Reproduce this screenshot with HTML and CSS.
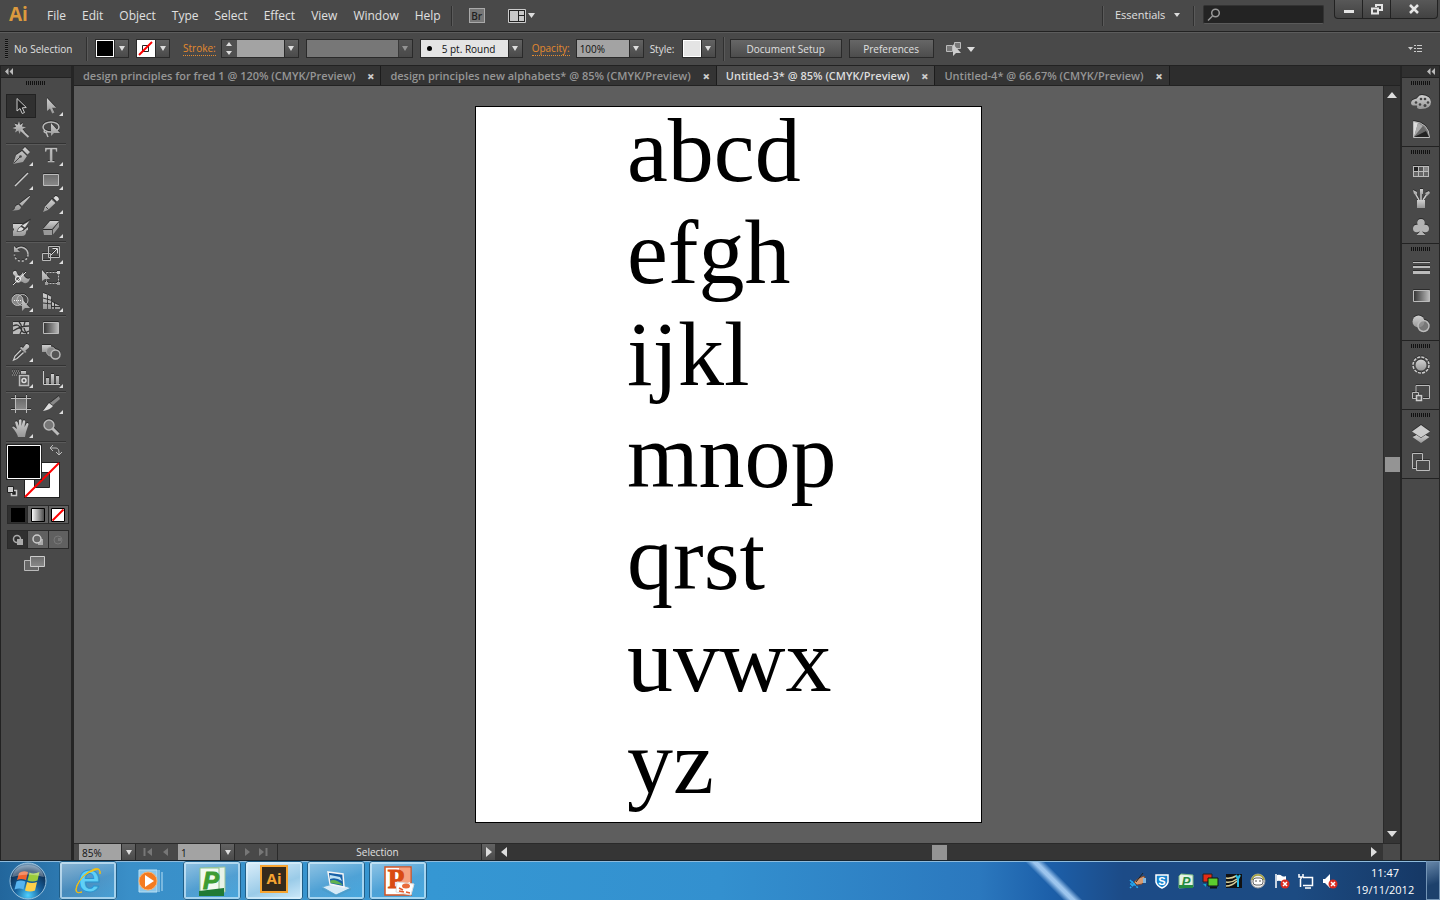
FILE: index.html
```html
<!DOCTYPE html>
<html lang="en">
<head>
  <meta charset="UTF-8" />
  <meta name="viewport" content="width=device-width, initial-scale=1.0">
  <title>Untitled-3* @ 85% (CMYK/Preview)</title>
  <link rel="stylesheet" href="styles.css">
</head>
<body>
  <svg class="defs" width="0" height="0">
    <defs>
      <linearGradient id="metal" x1="0" y1="0" x2="0" y2="1"><stop offset="0" stop-color="#d0d0d0"/><stop offset="1" stop-color="#979797"/></linearGradient>
      <linearGradient id="dim" x1="0" y1="0" x2="0" y2="1"><stop offset="0" stop-color="#6c6c6c"/><stop offset="1" stop-color="#898989"/></linearGradient>
      <linearGradient id="fade"><stop offset="0" stop-color="#333"/><stop offset="1" stop-color="#bbb"/></linearGradient>
      <linearGradient id="fadeWhite"><stop offset="0" stop-color="#fff"/><stop offset="1" stop-color="#444"/></linearGradient>
      <radialGradient id="orb" cx=".5" cy=".9" r=".9"><stop offset="0" stop-color="#4fd0ff"/><stop offset=".4" stop-color="#16609c"/><stop offset=".75" stop-color="#0d3157"/><stop offset="1" stop-color="#7fa6c6"/></radialGradient>
      <linearGradient id="ie" x1="0" y1="0" x2="0" y2="1"><stop offset="0" stop-color="#a5efff"/><stop offset="1" stop-color="#26a9e6"/></linearGradient>
    </defs>
  </svg>

  <!-- Menu bar -->
  <header class="menubar">
    <div class="logo">Ai</div>
    <nav class="menus">
      <button>File</button><button>Edit</button><button>Object</button><button>Type</button><button>Select</button><button>Effect</button><button>View</button><button>Window</button><button>Help</button>
    </nav>
    <span class="sep"></span>
    <button class="bridge" aria-label="Bridge">Br</button>
    <button class="arrange" aria-label="Arrange documents">
      <svg width="28" height="16" viewBox="0 0 28 16"><path d="M.5 1.500h17v13H.5z" fill="#222" stroke="#ccc"/><path d="M2 3h8v10H2zM11 3h5v4h-5zM11 8h5v5h-5z" fill="#c8c8c8"/><path d="M20 5h7l-3.500 5z" fill="#ddd"/></svg>
    </button>
    <div class="menubar-right">
      <span class="sep"></span>
      <button class="workspace">Essentials <i class="tri small"></i></button>
      <span class="sep"></span>
      <label class="search">
        <svg width="14" height="14" viewBox="0 0 14 14" fill="none" stroke="#999" stroke-width="1.500"><circle cx="8.500" cy="5" r="3.800"/><path d="M5.500 8L1 12.500"/></svg>
        <input type="text" aria-label="Search">
      </label>
      <div class="window-controls">
        <button aria-label="Minimise"><svg width="12" height="12"><path d="M1 7h10v3H1z" fill="#e4e4e4"/></svg></button>
        <button aria-label="Restore"><svg width="12" height="12" fill="none" stroke="#e4e4e4" stroke-width="2"><path d="M5 4V2h6v5H8M1 5.500h6v5H1z"/></svg></button>
        <button class="close" aria-label="Close"><svg width="12" height="12" stroke="#e4e4e4" stroke-width="2.500"><path d="M2 2l8 8M10 2l-8 8"/></svg></button>
      </div>
    </div>
  </header>

  <!-- Control bar -->
  <div class="controlbar">
    <i class="grip-v"></i>
    <span class="state">No Selection</span>
    <span class="sep tall"></span>
    <div class="combo gap-l"><button class="chip black" aria-label="Fill"></button><button class="drop" aria-label="Fill options"><i class="tri"></i></button></div>
    <div class="combo gap-l"><button class="chip" aria-label="Stroke"><svg width="17" height="17"><path d="M5.500 5.500h6v6h-6z" fill="none" stroke="#222"/><path d="M2 15L15 2" stroke="#f00" stroke-width="2"/></svg></button><button class="drop" aria-label="Stroke options"><i class="tri"></i></button></div>
    <label class="link stroke-label" for="strokeWidth">Stroke:</label>
    <div class="combo">
      <button class="spin" aria-label="Step"><i class="tri small up"></i><i class="tri small"></i></button>
      <input id="strokeWidth" class="field weight" type="text"><button class="drop" aria-label="Weights"><i class="tri"></i></button>
    </div>
    <div class="combo gap-l off"><select class="field profile" aria-label="Profile" disabled><option></option></select><span class="drop"><i class="tri"></i></span></div>
    <div class="combo gap-l"><span class="dot"></span><select class="field brush" aria-label="Brush"><option>5 pt. Round</option></select><span class="drop"><i class="tri"></i></span></div>
    <label class="link opacity-label" for="opacity">Opacity:</label>
    <div class="combo"><input id="opacity" class="field opacity" type="text" value="100%"><button class="drop" aria-label="Opacity values"><i class="tri"></i></button></div>
    <span class="style-label">Style:</span>
    <div class="combo"><button class="chip grey" aria-label="Style"></button><button class="drop" aria-label="Styles"><i class="tri"></i></button></div>
    <span class="sep tall"></span>
    <button class="push setup">Document Setup</button>
    <button class="push prefs">Preferences</button>
    <button class="bare similar" aria-label="Select similar">
      <svg width="30" height="16" viewBox="0 0 30 16"><path d="M1.500 4.500h6v6h-6zM9.500 1.500h6v6h-6z" fill="#777" stroke="#bbb"/><path d="M8 3v12l3-3h5z" fill="#ccc"/><path d="M22 6h8l-4 5z" fill="#ddd"/></svg>
    </button>
    <button class="bare flyout" aria-label="Panel menu">
      <svg width="15" height="10" viewBox="0 0 15 10"><path d="M0 3h5L2.500 6z" fill="#ccc"/><path d="M6 1.500h2M9 1.500h5M6 4.500h2M9 4.500h5M6 7.500h2M9 7.500h5" stroke="#ccc"/></svg>
    </button>
  </div>

  <main class="workspace-area">
    <!-- Tools -->
    <aside class="tools">
      <div class="panel-head"><svg width="8" height="7"><path d="M3.500 0v7L0 3.500zM8 0v7L4.500 3.500z" fill="#bbb"/></svg></div>
      <div class="grip"></div>
      <div class="tool-group">
        <button class="tool selected" aria-label="Selection"><svg viewBox="0 0 20 20"><path d="M6 2.500v12.500l3-2.500 2.200 5 2.300-1-2.200-4.700 4-.3z" fill="#222" stroke="#ccc"/></svg></button>
        <button class="tool more" aria-label="Direct selection"><svg viewBox="0 0 20 20"><path d="M6 2v13l3-2.500 2.200 5 2.200-1-2.200-4.700h4z"/></svg></button>
        <button class="tool" aria-label="Magic wand"><svg viewBox="0 0 20 20"><path d="M8 1l1 4 3-2-1 3.500 4 .5-3.500 2 2.500 3-4-1.500L8.500 14l-1.200-3.500L4 12.500l1-3.300L1.500 8l3.500-1.200L3.500 3.500l3.300 1.300z"/><path d="M10 10l7.500 7" stroke="#bbb" stroke-width="2"/></svg></button>
        <button class="tool" aria-label="Lasso"><svg viewBox="0 0 20 20"><ellipse cx="10" cy="7" rx="8" ry="5" fill="none" stroke="#bbb" stroke-width="1.500"/><path d="M4 10c-2 1 0 4 2 2M5 12l2 5" fill="none" stroke="#bbb" stroke-width="1.500"/><path d="M10 3v13l3-3h6z"/></svg></button>
      </div>
      <div class="tool-group">
        <button class="tool more" aria-label="Pen"><svg viewBox="0 0 20 20"><path d="M2 18l3-9 6-4 5 5-4 6zM11.500 3.500L14 1l5 5-2.500 2.500z"/><path d="M2.500 17.500L9 11" stroke="#444"/><circle cx="9.500" cy="10.500" r="1.300" fill="#444"/></svg></button>
        <button class="tool more" aria-label="Type"><svg viewBox="0 0 20 20"><text x="10" y="16" text-anchor="middle" font-family="Liberation Serif, serif" font-size="20" stroke="#bbb" stroke-width=".6">T</text></svg></button>
        <button class="tool more" aria-label="Line"><svg viewBox="0 0 20 20"><path d="M4 16L17 3" stroke="#ccc" stroke-width="1.500"/></svg></button>
        <button class="tool more" aria-label="Rectangle"><svg viewBox="0 0 20 20"><path d="M2.500 4.500h15v11h-15z" fill="url(#dim)" stroke="#bbb"/></svg></button>
        <button class="tool" aria-label="Paintbrush"><svg viewBox="0 0 20 20"><path d="M18.500 2q1 0 0 1.200L11 12 8.500 9.500zM7.500 10.500l2.500 2.500q0 4-9 3.500 3-1 3-3.500 1.500-2.500 3.500-2.500z"/></svg></button>
        <button class="tool more" aria-label="Pencil"><svg viewBox="0 0 20 20"><path d="M2 18l2-5.500 7-7.500 4 3.500-8 7.500z"/><path d="M12.500 4l2-2q3 0 3.500 3.500l-2 2z" fill="#ddd"/><path d="M5 13l2.500 2.500M11 5.500l4 3.500" stroke="#444"/></svg></button>
        <button class="tool" aria-label="Blob brush"><svg viewBox="0 0 20 20"><path d="M2 6h10L7 11v2h5l5-4v3q-2 0-2 2 0 4-4 4H2v-5q2-2 0-3z"/><path d="M19.500 2L14 10l-3.500-2.500z" fill="#ddd" stroke="#333" stroke-width=".6"/><path d="M10 8.500l3 2q-1 3.500-7 3 1-4 4-5z" fill="#ddd" stroke="#333" stroke-width=".6"/></svg></button>
        <button class="tool more" aria-label="Eraser"><svg viewBox="0 0 20 20"><path d="M2 11l7-8h9l-7 8z"/><path d="M2 12h9v5H3zM12 11.500l6-7.500v5l-6 7.500z" fill="#999"/></svg></button>
      </div>
      <div class="tool-group">
        <button class="tool more" aria-label="Rotate"><svg viewBox="0 0 20 20" ><path d="M5 5.500q4-3.500 8-1.500 4 2 4 6.500" fill="none" stroke="#bbb" stroke-width="1.500"/><path d="M17 10.500a6.700 6.700 0 0 1-13.500 0" fill="none" stroke="#bbb" stroke-width="1.500" stroke-dasharray="2 2"/><path d="M3 2v6h6z"/></svg></button>
        <button class="tool more" aria-label="Scale"><svg viewBox="0 0 20 20"><path d="M7.500 2.500h11v11h-11zM1.500 9.500h8v7h-8z" fill="none" stroke="#bbb"/><path d="M10 11l6-6M11.500 4.500H16.500V9.500" fill="none" stroke="#ddd"/></svg></button>
        <button class="tool more" aria-label="Width"><svg viewBox="0 0 20 20"><path d="M2 4q3-3 4 1 2 6 6-1l1 4q3 4 6 2-1 6-6 5-3-3-5 0-5 0-3-4-1-4-3-5z"/><circle cx="7" cy="11" r="2.500" fill="#555" stroke="#fff"/><path d="M2 17L15 4" stroke="#ddd"/></svg></button>
        <button class="tool" aria-label="Free transform"><svg viewBox="0 0 20 20"><path d="M5.500 4.500h12v11h-12z" fill="none" stroke="#bbb" stroke-dasharray="2 1"/><path d="M16 3h3v3h-3zM4 14h3v3H4zM16 14h3v3h-3zM1 2v11l3-2h5z"/></svg></button>
        <button class="tool more" aria-label="Shape builder"><svg viewBox="0 0 20 20"><circle cx="6.500" cy="8" r="5.500" fill="#888" stroke="#bbb"/><circle cx="11.500" cy="8" r="5.500" fill="none" stroke="#bbb"/><path d="M3 8.500h10" stroke="#eee" stroke-dasharray="1 1"/><path d="M11 7v12l3-3h5z"/></svg></button>
        <button class="tool more" aria-label="Perspective grid"><svg viewBox="0 0 20 20"><path d="M2 1l4 1.500V17H2zM7 3l3 1.500V17H7z"/><path d="M11 10l8 4v3h-8z"/><path d="M2 6l9 2.500M2 11l9 1M13.500 11v6M10 14.500h9" stroke="#333"/></svg></button>
      </div>
      <div class="tool-group">
        <button class="tool" aria-label="Mesh"><svg viewBox="0 0 20 20"><path d="M2 4h16v12H2z" fill="#bbb"/><path d="M2 8q6-3 8 3t8 2M8 4q5 5 1 12M14 4q-3 6 2 12M2 13q7-5 16-5" fill="none" stroke="#333" stroke-width="1.300"/></svg></button>
        <button class="tool" aria-label="Gradient"><svg viewBox="0 0 20 20"><path d="M2.500 4.500h15v11h-15z" fill="url(#fade)" stroke="#bbb"/></svg></button>
        <button class="tool more" aria-label="Eyedropper"><svg viewBox="0 0 20 20"><path d="M12 6l3-4q4 0 3 3.500L14.500 8.500 15.500 10 14 11 9 6l1.200-1.200z"/><path d="M10 8L4 14l-1.500 4L6 16.500l6.500-6" fill="none" stroke="#ccc" stroke-width="1.300"/></svg></button>
        <button class="tool" aria-label="Blend"><svg viewBox="0 0 20 20"><path d="M1 3h9v7H1z"/><circle cx="10" cy="9.500" r="4.500" fill="#888" stroke="#aaa"/><circle cx="14.500" cy="12.500" r="4.500" fill="#555" stroke="#bbb" stroke-width="1.500"/></svg></button>
      </div>
      <div class="tool-group">
        <button class="tool more" aria-label="Symbol sprayer"><svg viewBox="0 0 20 20"><path d="M8.500 7.500h9v10h-9z" fill="#555" stroke="#bbb" stroke-width="1.500"/><path d="M10 3h5v3h-5z"/><circle cx="13" cy="12.500" r="2" fill="none" stroke="#ddd" stroke-width="1.500"/><path d="M1 3h8M2 5h8M1 7h6" stroke="#aaa" stroke-dasharray="1 1"/></svg></button>
        <button class="tool more" aria-label="Column graph"><svg viewBox="0 0 20 20"><path d="M2.500 3v13.500H19" fill="none" stroke="#ccc"/><path d="M5 10h3v6H5zM10 6h3v10h-3zM15 8h3v8h-3z"/></svg></button>
      </div>
      <div class="tool-group">
        <button class="tool" aria-label="Artboard"><svg viewBox="0 0 20 20"><path d="M4 5h12v10H4z" fill="url(#dim)"/><path d="M4.500 1v18M15.500 1v18M0 4.500h20M0 15.500h20" fill="none" stroke="#bbb"/></svg></button>
        <button class="tool more" aria-label="Slice"><svg viewBox="0 0 20 20"><path d="M18 2l1 3-7 6-3-2z" fill="#888"/><path d="M8 9l4 3q-3 4-10 5z" fill="#ddd"/></svg></button>
        <button class="tool more" aria-label="Hand"><svg viewBox="0 0 20 20"><path d="M1 9q2-1 3 .5L6 11 4 4q1.500-1.500 2.500 0L8 8V2q1.500-1.500 2.500 0v6l1.500-5.500q2-1 2.200 1L13.500 9l2.300-4q1.800-.5 1.700 1.500L15 14l-1 5H7q-1-4-6-10z"/></svg></button>
        <button class="tool" aria-label="Zoom"><svg viewBox="0 0 20 20"><circle cx="8" cy="7" r="5" fill="#777" stroke="#bbb" stroke-width="1.500"/><path d="M11.500 10.500l6 6" stroke="#bbb" stroke-width="3"/></svg></button>
      </div>
      <button class="bare paint" aria-label="Fill and stroke">
        <svg width="60" height="58" viewBox="0 0 60 58"><path d="M18 20h36v36H18z" fill="#222"/><path d="M19 21h34v34H19z" fill="#fff"/><path d="M28.500 30.500h15v15h-15z" fill="#4a4a4a" stroke="#222"/><path d="M19 55L53 21" stroke="#f00" stroke-width="2"/><path d="M0 2h36v36H0z" fill="#222"/><path d="M1.500 3.500h33v33h-33z" fill="#000" stroke="#fff"/><path d="M45 6h5q3 0 3 5v2M47 3l-3 3 3 3M50 10l3 3 3-3" fill="none" stroke="#bbb"/><path d="M5.500 48.500h5v5h-5z" fill="#222" stroke="#ccc" stroke-width="1.500"/><path d="M1.500 44.500h6v6h-6z" fill="#ccc" stroke="#222"/></svg>
      </button>
      <div class="modes">
        <button class="on" aria-label="Color"><svg width="14" height="14"><path d="M0 0h14v14H0z" fill="#000"/></svg></button><button aria-label="Gradient"><svg width="14" height="14"><path d="M.5.5h13v13H.5z" fill="url(#fadeWhite)" stroke="#000"/></svg></button><button aria-label="None"><svg width="14" height="14"><path d="M.5.5h13v13H.5z" fill="#fff" stroke="#000"/><path d="M1.500 12.500l11-11" stroke="#f00" stroke-width="2"/></svg></button>
      </div>
      <div class="modes draw">
        <button class="on" aria-label="Draw normal"><svg width="14" height="12"><circle cx="6" cy="5" r="3.500" fill="none" stroke="#aaa" stroke-width="1.500"/><path d="M6 5h6v6H6z" fill="#aaa"/></svg></button><button aria-label="Draw behind"><svg width="14" height="12"><path d="M7 5h5v6H7z" fill="#aaa"/><circle cx="6" cy="5" r="4" fill="#666" stroke="#ccc" stroke-width="1.500"/></svg></button><button aria-label="Draw inside"><svg width="14" height="12"><circle cx="7" cy="6" r="4" fill="none" stroke="#777"/><path d="M7 4h3v3H7z" fill="#777"/></svg></button>
      </div>
      <button class="bare screen" aria-label="Screen mode">
        <svg width="22" height="17" viewBox="0 0 22 17"><path d="M.5 5.500h14v10H.5z" fill="#666" stroke="#bbb"/><path d="M6.500 1.500h14v10h-14z" fill="url(#dim)" stroke="#ccc"/></svg>
      </button>
    </aside>

    <!-- Document window -->
    <section class="document">
      <div class="tabs">
        <button class="tab">design principles for fred 1 @ 120% (CMYK/Preview)<b>×</b></button>
        <button class="tab">design principles new alphabets* @ 85% (CMYK/Preview)<b>×</b></button>
        <button class="tab active">Untitled-3* @ 85% (CMYK/Preview)<b>×</b></button>
        <button class="tab">Untitled-4* @ 66.67% (CMYK/Preview)<b>×</b></button>
      </div>
      <div class="view">
        <div class="canvas">
          <div class="artboard">
            <p class="letters">abcd<br>efgh<br>ijkl<br>mnop<br>qrst<br>uvwx<br>yz</p>
          </div>
        </div>
        <div class="scroll vertical"><i class="arrow up"></i><i class="thumb"></i><i class="arrow down"></i></div>
      </div>
      <div class="statusbar">
        <input class="field" type="text" value="85%" aria-label="Zoom"><button class="drop" aria-label="Zoom levels"><i class="tri"></i></button>
        <span class="nav"><svg width="28" height="10"><path d="M1.500 1v8" stroke="#777" stroke-width="2"/><path d="M9 1v8L4 5zM25 1v8L20 5z" fill="#777"/></svg></span>
        <input class="field" type="text" value="1" aria-label="Artboard number"><button class="drop" aria-label="Artboards"><i class="tri"></i></button>
        <span class="nav"><svg width="28" height="10"><path d="M3 1v8l5-4zM17 1v8l5-4z" fill="#777"/><path d="M24.500 1v8" stroke="#777" stroke-width="2"/></svg></span>
        <span class="current">Selection</span>
        <button class="drop" aria-label="Status options"><i class="arrow right"></i></button>
        <div class="scroll horizontal"><i class="arrow left"></i><i class="thumb"></i><i class="arrow right"></i></div>
        <span class="corner"></span>
      </div>
    </section>

    <!-- Panel dock -->
    <aside class="dock">
      <div class="panel-head"><svg width="8" height="7"><path d="M3.500 0v7L0 3.500zM8 0v7L4.500 3.500z" fill="#bbb"/></svg></div>
      <div class="dock-group">
        <button aria-label="Color"><svg viewBox="0 0 20 20"><path d="M0 11q0-3 4-4 2 0 3-2 1-2 4-2 9 1 9 7 0 7-10 7-4 0-4-2 1-2-1-1.500-5 .5-5-2.500z"/><g fill="#444"><circle cx="5" cy="10.500" r="1.300"/><circle cx="10" cy="7" r="1.300"/><circle cx="14" cy="7" r="1.300"/><circle cx="17" cy="10.500" r="1.300"/><circle cx="14" cy="13.500" r="1.500"/><circle cx="9" cy="12.500" r="1.300"/></g></svg></button>
        <button aria-label="Color guide"><svg viewBox="0 0 20 20"><path d="M2.500 1.500v16h16Q18 3 2.500 1.500z" fill="#777" stroke="#bbb"/><path d="M3 17V2l4 1z" fill="#ddd"/><path d="M3 17L7 3l5 3z" fill="#aaa"/><path d="M3 17L12 6l3 5z" fill="#666"/><path d="M3 17l12-6 3 6z" fill="#222"/></svg></button>
      </div>
      <div class="dock-group">
        <button aria-label="Swatches"><svg viewBox="0 0 20 20"><path d="M2 5h16v11H2z" fill="#bbb"/><path d="M3 6h4v4H3z" fill="#222"/><path d="M8 6h4v4H8z" fill="#555"/><path d="M13 6h4v4h-4z" fill="#888"/><path d="M3 11h4v4H3zM8 11h4v4H8zM13 11h4v4h-4z" fill="#666"/></svg></button>
        <button aria-label="Brushes"><svg viewBox="0 0 20 20"><path d="M6 11h8v8H6z"/><path d="M8 11L4 4M10 11V3M12 11l4-6" stroke="#ccc" stroke-width="1.500"/><path d="M2 1l4 2v3L3 5zM9 0h3v5H9zM14 4l4-2 1 2-3 3z"/></svg></button>
        <button aria-label="Symbols"><svg viewBox="0 0 20 20"><g fill="#b4b4b4"><circle cx="10" cy="5.800" r="3.800"/><circle cx="5.800" cy="11.500" r="3.800"/><circle cx="14.200" cy="11.500" r="3.800"/><path d="M8 8h4l-.5 7 3 3h-9l3-3z"/></g></svg></button>
      </div>
      <div class="dock-group">
        <button aria-label="Stroke"><svg viewBox="0 0 20 20"><path d="M2 4h17v1H2zM2 8h17v2H2zM2 13h17v3H2z" fill="#bbb"/></svg></button>
        <button aria-label="Gradient"><svg viewBox="0 0 20 20"><path d="M2.500 4.500h16v11h-16z" fill="url(#fade)" stroke="#bbb"/></svg></button>
        <button aria-label="Transparency"><svg viewBox="0 0 20 20"><circle cx="7.500" cy="7.500" r="6"/><circle cx="12.500" cy="12" r="5.500" fill="#888" fill-opacity=".8" stroke="#bbb" stroke-width="1.500"/></svg></button>
      </div>
      <div class="dock-group">
        <button aria-label="Appearance"><svg viewBox="0 0 20 20"><circle cx="10" cy="10" r="5.500"/><circle cx="10" cy="10" r="8" fill="none" stroke="#ccc" stroke-width="1.500" stroke-dasharray="3 1.200"/></svg></button>
        <button aria-label="Graphic styles"><svg viewBox="0 0 20 20"><path d="M5 9V2.500h13.500v13H12M1.500 9.500h6v6h-6z" fill="none" stroke="#bbb"/><path d="M5.500 12.500h5v5h-5z" fill="#555" stroke="#ccc" stroke-width="1.500"/></svg></button>
      </div>
      <div class="dock-group">
        <button aria-label="Layers"><svg viewBox="0 0 20 20"><path d="M1.500 13l4-2 4.500 3 4.500-3 4 2-8.500 6z"/><path d="M10 1l9 6.500-9 6-9-6z" fill="#ccc"/></svg></button>
        <button aria-label="Artboards"><svg viewBox="0 0 20 20"><path d="M1.500 1.500h10v15h-10z" fill="none" stroke="#bbb"/><path d="M5.500 8.500h13v10h-13z" fill="#494949" stroke="#bbb"/></svg></button>
      </div>
    </aside>
  </main>

  <!-- Taskbar -->
  <footer class="taskbar">
    <button class="start" aria-label="Start">
      <svg width="38" height="38" viewBox="0 0 38 38"><circle cx="19" cy="19" r="18" fill="url(#orb)" stroke="#9cc3dd"/><path d="M10 11q4-3 9-1l-2 8q-5-2-9 0z" fill="#f0632c"/><path d="M20.500 10.500q4 2 10-.5l-2 8.500q-5 2-10 0z" fill="#9bcb3c"/><path d="M7.500 19.500q4-2 9 0l-2 8q-4-2-9 0z" fill="#58b4f0"/><path d="M18 20q5 2 10 0l-2 8.500q-5 2-10 0z" fill="#fdd04a"/><path d="M3 15Q6 3 19 3t16 12Q19 10 3 15z" fill="#fff" opacity=".3"/></svg>
    </button>
    <button class="app" aria-label="Internet Explorer">
      <svg width="32" height="32" viewBox="0 0 32 32"><text x="17" y="27" text-anchor="middle" font-family="Liberation Sans, sans-serif" font-weight="700" font-size="40" fill="#5fd0f7" stroke="#2a93d0">e</text><path d="M28 9q1-6-5-4Q10 9 5 20q-4 10 5 7-8 3-5-6Q10 9 22 4q7-2 6 5z" fill="#fbd11f" stroke="#f2bd12"/></svg>
    </button>
    <button class="app plain" aria-label="Media Player">
      <svg width="32" height="32" viewBox="0 0 32 32"><path d="M5 5h18v22H5z" fill="#8cc7ea" stroke="#b9e0f5"/><path d="M25 5v22M28 7v19" stroke="#b9e0f5"/><circle cx="14" cy="16" r="9" fill="#f47b20" stroke="#fbb36f"/><path d="M11 10l9 6-9 6z" fill="#fff"/></svg>
    </button>
    <button class="app" aria-label="Publisher">
      <svg width="32" height="32" viewBox="0 0 32 32"><path d="M8 3l21-1v25L8 28z" fill="#e8f3e8" stroke="#9bc59b"/><path d="M4 3h19v25H4z" fill="#f3faf2" stroke="#8fc08d"/><path d="M3 26l25-3v8H3z" fill="#1f7a36"/><text x="15" y="24" text-anchor="middle" font-family="Liberation Sans, sans-serif" font-weight="700" font-style="italic" font-size="24" fill="#3d9c33" stroke="#3d9c33">P</text></svg>
    </button>
    <button class="app current-app" aria-label="Illustrator"><span class="ai-icon">Ai</span></button>
    <button class="app" aria-label="Pictures">
      <svg width="32" height="32" viewBox="0 0 32 32"><path d="M2 22l14-4 15 5-15 7z" fill="#d5eaf7" stroke="#5da9d4"/><path d="M2 23l14 7v2L2 25zM31 23l-15 7v2l15-7z" fill="#4b9dcc"/><path d="M8 7l15 2 1 13-14-3z" fill="#1761a8" stroke="#f5f5f5" stroke-width="1.500"/><path d="M10 16q5-3 13 4l-12-2z" fill="#61b350"/><path d="M10 10l10 2 2 4q-6-4-12-2z" fill="#bfe3f5"/></svg>
    </button>
    <button class="app" aria-label="PowerPoint">
      <svg width="32" height="32" viewBox="0 0 32 32"><path d="M3 2h26v28H3V6z" fill="#fff" stroke="#d55322" stroke-width="1.500"/><path d="M17 3h11v14q-6 3-11 2z" fill="#f6a27f"/><text x="14" y="23" text-anchor="middle" font-family="Liberation Serif, serif" font-weight="700" font-size="27" fill="#d94a13" stroke="#d94a13">P</text><path d="M15 17l17 2-3 11-15-3z" fill="#fff" stroke="#ddd"/><ellipse cx="24" cy="21" rx="4" ry="2.500" fill="#e86b3a"/><path d="M17 23l4 2M17 26l5 1M24 27l4 1" stroke="#e25a2b" stroke-width="1.500"/></svg>
    </button>
    <div class="tray">
      <svg viewBox="0 0 16 16"><path d="M0 7l8 8M8 8l-8 7M2 8v6M0 11h9" stroke="#26a9f0" stroke-width="1.500" stroke-dasharray="2 1"/><path d="M4 9l5-4 5-2 2 4-4 4-5 1z" fill="#d69a70" stroke="#744832"/><path d="M6 9l7-9" stroke="#222"/><path d="M13 5h3v5h-3z" fill="#7db5e0"/></svg>
      <svg viewBox="0 0 16 16"><path d="M2 2h12v7q-1 4-6 6-5-2-6-6z" fill="#1683cf" stroke="#fff" stroke-width="1.500"/><text x="8" y="11.500" text-anchor="middle" font-family="Liberation Sans, sans-serif" font-weight="700" font-size="11" fill="#fff">S</text></svg>
      <svg viewBox="0 0 16 16"><path d="M3 1l12 1v12l-14 1V3z" fill="#e4f2e5" stroke="#7cbb83"/><path d="M1 12h14v3H1z" fill="#258b42"/><text x="8" y="13" text-anchor="middle" font-family="Liberation Sans, sans-serif" font-weight="700" font-style="italic" font-size="13" fill="#258b42">P</text></svg>
      <svg viewBox="0 0 16 16"><path d="M1 1h9v8H1z" fill="#e52b14" stroke="#222"/><path d="M6 5h10v8H6z" fill="#5ccc2d" stroke="#111"/><path d="M8 14.500h7" stroke="#111" stroke-width="2"/><path d="M1 11l3 3v-3z" fill="#1ac"/></svg>
      <svg viewBox="0 0 16 16"><path d="M0 1h16v14H0z" fill="#111"/><path d="M0 5q5 1 10-2M0 9q6 1 11-3M0 13q6 0 11-5" fill="none" stroke="#d6cf9b" stroke-width="1.500"/><path d="M10 2l2 4 2-4M12 5v9" fill="none" stroke="#28bce5" stroke-width="2"/></svg>
      <svg viewBox="0 0 16 16"><circle cx="8" cy="8" r="7" fill="#eee" stroke="#999"/><path d="M2 7q1-5 6-5t6 5" fill="none" stroke="#a6a43a" stroke-width="1.500"/><rect x="3" y="5" width="10" height="7" rx="3" fill="#fff" stroke="#666"/><path d="M5.500 8h1M9.500 8h1" stroke="#222" stroke-width="1.500"/></svg>
      <svg viewBox="0 0 16 16"><path d="M2 1v14" stroke="#fff" stroke-width="1.500"/><path d="M3 2q3-1 5 1 2 1 4 0v6q-3 1-4 0-2-2-5-1z" fill="#fff"/><circle cx="11" cy="11" r="4.500" fill="#d92b20"/><path d="M9 9l4 4M13 9l-4 4" stroke="#fff" stroke-width="1.500"/></svg>
      <svg viewBox="0 0 16 16"><path d="M5 4.500h9.500v8H5M7 15h6M2.500 6v8M1 1v3h4V1M3 4v2" fill="none" stroke="#fff" stroke-width="1.500"/></svg>
      <svg viewBox="0 0 16 16"><path d="M1 6h2l5-5v14l-5-5H1z" fill="#fff"/><circle cx="11" cy="11" r="4.500" fill="#d92b20"/><path d="M9 9l4 4M13 9l-4 4" stroke="#fff" stroke-width="1.500"/></svg>
    </div>
    <div class="clock"><span>11:47</span><span>19/11/2012</span></div>
    <button class="show-desktop" aria-label="Show desktop"></button>
  </footer>
</body>
</html>
```
FILE: styles.css
```css
* {
  box-sizing: border-box;
}

body {
  margin: 0;
  height: 100vh;
  display: flex;
  flex-direction: column;
  overflow: hidden;
  font-family: "Open Sans", "Noto Sans", sans-serif;
  font-size: 10px;
  line-height: 16px;
  color: #e0e0e0;
  background: #494949;
}

button,
input,
select {
  margin: 0;
  padding: 0;
  border: 0;
  border-radius: 0;
  font: inherit;
  color: inherit;
  background: none;
}

svg {
  display: block;
  flex: none;
  overflow: visible;
}

.defs {
  position: absolute;
}

.bare {
  display: flex;
}

.sep {
  width: 2px;
  height: 20px;
  border-left: 1px solid #303030;
  border-right: 1px solid #5a5a5a;
}

.sep.tall {
  height: 24px;
}

.tri {
  width: 0;
  height: 0;
  border: 3px solid transparent;
  border-top: 5px solid #ddd;
  border-bottom: 0;
}

.tri.small {
  border-top-width: 4px;
}

.tri.up {
  border-top: 0;
  border-bottom: 4px solid #ddd;
}

/* menu bar */
.menubar {
  flex: none;
  height: 32px;
  display: flex;
  align-items: center;
  padding-left: 9px;
  border-bottom: 1px solid #222;
  font-size: 12px;
}

.logo {
  width: 30px;
  font-size: 19px;
  font-weight: 700;
  line-height: 24px;
  padding-bottom: 3px;
  color: #dc9a3e;
}

.menus {
  display: flex;
  margin-right: 2px;
}

.menus button {
  padding: 0 8px;
}

.bridge {
  width: 16px;
  height: 15px;
  margin: 0 23px 0 16px;
  border: 1px solid #aaa;
  background: #777;
  color: #222;
  font-size: 10px;
  line-height: 12px;
  font-weight: 600;
}

.menubar-right {
  margin-left: auto;
  align-self: stretch;
  display: flex;
  align-items: center;
}

.workspace {
  display: flex;
  align-items: center;
  justify-content: space-between;
  width: 89px;
  padding: 0 13px 2px 11px;
  font-size: 11px;
}

.search {
  display: flex;
  align-items: center;
  width: 121px;
  height: 19px;
  margin: 0 10px 2px 8px;
  padding-left: 3px;
  border: 1px solid #333;
  border-bottom-color: #5a5a5a;
  border-radius: 2px;
  background: #232323;
}

.search input {
  flex: 1;
  min-width: 0;
}

.window-controls {
  display: flex;
  align-self: flex-start;
  height: 19px;
  margin-right: 2px;
  border: 1px solid #222;
  border-top: 0;
  border-radius: 0 0 4px 4px;
  background: linear-gradient(#585858, #424242);
}

.window-controls button {
  width: 28px;
  display: flex;
  align-items: center;
  justify-content: center;
  border-right: 1px solid #222;
}

.window-controls .close {
  width: 46px;
  border-right: 0;
}

/* control bar */
.controlbar {
  flex: none;
  height: 34px;
  display: flex;
  align-items: center;
  padding: 0 17px 1px 5px;
  border-top: 1px solid #5c5c5c;
  border-bottom: 1px solid #222;
}

.grip-v {
  width: 3px;
  height: 20px;
  margin-right: 6px;
  background: repeating-linear-gradient(#111 0 1px, #555 1px 2px);
}

.state {
  width: 72px;
  white-space: nowrap;
}

.combo {
  position: relative;
  display: flex;
  height: 19px;
  border: 1px solid #2a2a2a;
}

.gap-l {
  margin-left: 7px;
}

.drop {
  width: 14px;
  display: flex;
  flex: none;
  align-items: center;
  justify-content: center;
  border-left: 1px solid #2a2a2a;
  background: linear-gradient(#626262, #4a4a4a);
}

.chip {
  width: 18px;
  border: 1px solid #fff;
  background: #fff;
}

.chip.black {
  background: #000;
}

.chip.grey {
  background: #e4e4e4;
}

.chip svg {
  margin: -1px;
}

.link {
  color: #e58a2e;
  line-height: 13px;
  border-bottom: 1px dotted #e58a2e;
}

.stroke-label {
  margin: 0 5px 0 13px;
}

.opacity-label {
  margin: 0 6px 0 9px;
}

.style-label {
  width: 32px;
  margin-left: 6px;
}

.spin {
  width: 15px;
  display: flex;
  flex-direction: column;
  align-items: center;
  justify-content: space-around;
  background: #505050;
}

.field {
  padding-left: 3px;
  background: #a3a3a3;
  color: #111;
}

select.field {
  appearance: none;
  opacity: 1;
}

.weight {
  width: 47px;
}

.profile {
  width: 91px;
}

.off .field {
  background: #777;
}

.off .drop {
  opacity: 0.5;
}

.brush {
  width: 87px;
  padding-left: 21px;
  background: #e4e4e4;
}

.dot {
  position: absolute;
  left: 6px;
  top: 6px;
  width: 5px;
  height: 5px;
  border-radius: 50%;
  background: #000;
}

.opacity {
  width: 52px;
}

.style-label + .combo {
  margin-right: 7px;
}

.push {
  height: 19px;
  margin-left: 5px;
  border: 1px solid #2a2a2a;
  background: linear-gradient(#666, #4d4d4d);
}

.setup {
  width: 112px;
}

.prefs {
  width: 85px;
  margin-left: 7px;
}

.similar {
  margin-left: 11px;
}

.flyout {
  margin-left: auto;
}

/* work area */
.workspace-area {
  flex: 1;
  min-height: 0;
  display: flex;
}

.panel-head {
  height: 12px;
  display: flex;
  align-items: center;
  padding: 0 4px;
  background: #303030;
  border-bottom: 1px solid #222;
}

.grip {
  width: 20px;
  height: 4px;
  margin: 3px auto 9px;
  background: repeating-linear-gradient(90deg, #111 0 1px, #494949 1px 2px);
}

.tools {
  flex: none;
  width: 74px;
  border-left: 1px solid #222;
  border-right: 3px solid #252525;
}

.tool-group {
  display: grid;
  grid-template-columns: 30px 30px;
  margin: 0 5px;
  border-bottom: 1px solid #333;
  box-shadow: 0 1px #5a5a5a;
  padding-bottom: 1px;
}

.tool {
  position: relative;
  height: 24px;
  display: flex;
  align-items: center;
  justify-content: center;
}

.tool svg,
.dock button svg {
  width: 20px;
  height: 20px;
  fill: url(#metal);
  filter: drop-shadow(0 -1px 0 #2c2c2c);
}

.tool.selected {
  background: #303030;
  border: 1px solid #222;
}

.tool.more::after {
  content: "";
  position: absolute;
  right: 3px;
  bottom: 2px;
  border-left: 4px solid transparent;
  border-bottom: 4px solid #ddd;
}

.paint {
  margin: 0 5px 5px;
}

.modes {
  width: 62px;
  display: flex;
  margin: 0 5px 6px 6px;
  border: 1px solid #2a2a2a;
}

.modes button {
  flex: 1;
  height: 17px;
  display: flex;
  align-items: center;
  justify-content: center;
  background: #606060;
  border-right: 1px solid #2a2a2a;
}

.modes button:last-child {
  border-right: 0;
}

.modes .on {
  background: #303030;
}

.screen {
  margin: 0 23px;
}

.document {
  flex: 1;
  min-width: 0;
  display: flex;
  flex-direction: column;
}

.tabs {
  flex: none;
  height: 20px;
  display: flex;
  background: #2d2d2d;
  border-bottom: 1px solid #222;
}

.tab {
  display: flex;
  align-items: center;
  gap: 11px;
  padding: 0 5px 0 9px;
  border-right: 1px solid #1c1c1c;
  background: #343434;
  color: #969696;
  font-size: 11px;
  font-weight: 600;
  white-space: nowrap;
}

.tab b {
  width: 9px;
  font-size: 13px;
  color: #ccc;
}

.tab.active {
  background: #494949;
  color: #ddd;
}

.view {
  flex: 1;
  min-height: 0;
  display: flex;
}

.canvas {
  flex: 1;
  min-width: 0;
  display: flex;
  justify-content: center;
  padding: 20px;
  background: #5e5e5e;
}

.artboard {
  height: 100%;
  aspect-ratio: 507 / 717;
  padding-left: 151px;
  border: 1px solid #000;
  background: #fff;
}

.letters {
  margin: -8px 0 0;
  font-family: Georgia, "Liberation Serif", serif;
  font-size: 92px;
  line-height: 102px;
  color: #000;
}

.scroll {
  display: flex;
  align-items: center;
  justify-content: space-between;
  background: #353535;
}

.vertical {
  width: 17px;
  flex-direction: column;
  padding: 6px 0;
  border-left: 1px solid #2a2a2a;
}

.horizontal {
  flex: 1;
  padding: 0 6px;
}

.thumb {
  width: 15px;
  height: 15px;
  background: #949494;
}

.arrow {
  width: 0;
  height: 0;
  border: 5px solid transparent;
}

.arrow.up {
  border-top: 0;
  border-bottom: 6px solid #ddd;
}

.arrow.down {
  border-bottom: 0;
  border-top: 6px solid #ddd;
}

.arrow.left {
  border-left: 0;
  border-right: 6px solid #ddd;
}

.arrow.right {
  border-right: 0;
  border-left: 6px solid #ddd;
}

.statusbar {
  flex: none;
  height: 17px;
  display: flex;
  padding-left: 5px;
  border-top: 1px solid #2a2a2a;
}

.statusbar .field {
  width: 42px;
  padding-top: 1px;
}

.statusbar .nav {
  width: 43px;
  display: flex;
  align-items: center;
  justify-content: center;
  border-left: 1px solid #2a2a2a;
}

.statusbar .current {
  width: 204px;
  padding-right: 4px;
  text-align: center;
  border-left: 1px solid #2a2a2a;
}

.corner {
  width: 17px;
}

/* dock */
.dock {
  flex: none;
  width: 40px;
  border-left: 2px solid #252525;
  border-right: 1px solid #252525;
}

.dock .panel-head {
  justify-content: flex-end;
}

.dock-group {
  display: flex;
  flex-direction: column;
  padding-bottom: 2px;
  border-bottom: 1px solid #222;
}

.dock-group::before {
  content: "";
  width: 20px;
  height: 4px;
  margin: 3px auto;
  background: repeating-linear-gradient(90deg, #111 0 1px, #494949 1px 2px);
}

.dock-group button {
  height: 28px;
  display: flex;
  align-items: center;
  justify-content: center;
}

/* taskbar */
.taskbar {
  flex: none;
  height: 40px;
  display: flex;
  align-items: stretch;
  border-top: 1px solid #16242f;
  box-shadow: inset 0 1px #8fbbdc;
  background:
    linear-gradient(45deg, transparent 40%, #9cc5ee 48% 52%, transparent 60%) 1024px 0 / 60px 40px no-repeat,
    linear-gradient(90deg, #22669c, #3a8fc8 9%, #3597d3 30%, #3390cf 50%, #2b78be 68%, #1c5fa9 73%, #1c4b87 78%, #1c4b82 90%, #153662);
}

.start {
  width: 55px;
  margin-right: 4px;
  padding-top: 1px;
  display: flex;
  justify-content: center;
}

.app {
  width: 58px;
  margin: 0 4px 0 0;
  display: flex;
  align-items: center;
  justify-content: center;
  border: 1px solid #c5e5f6;
  border-radius: 3px;
  outline: 1px solid #1f5e88;
  outline-offset: -1px;
  background: linear-gradient(160deg, rgba(255, 255, 255, 0.45), rgba(255, 255, 255, 0.12) 55%, rgba(110, 210, 255, 0.3));
  box-shadow: inset 0 0 0 2px rgba(225, 245, 255, 0.6);
}

.app.plain {
  border-color: transparent;
  outline: 0;
  background: none;
  box-shadow: none;
}

.current-app {
  background: linear-gradient(160deg, #dceefa, #9acbe8 60%, #cfeafa);
}

.ai-icon {
  width: 28px;
  height: 28px;
  margin-bottom: 4px;
  border: 2px solid #f7a431;
  background: #352a1c;
  color: #f7a431;
  font-size: 15px;
  font-weight: 700;
  line-height: 23px;
}

.tray {
  margin-left: auto;
  display: flex;
  align-items: center;
  gap: 8px;
}

.tray svg {
  width: 16px;
  height: 16px;
}

.clock {
  width: 88px;
  padding: 3px 0 0 6px;
  text-align: center;
  font-size: 11px;
  line-height: 17px;
  color: #fff;
}

.clock span {
  display: block;
}

.show-desktop {
  width: 14px;
  border: 1px solid #7495b6;
  background: linear-gradient(160deg, #6686a8, #1d416c 60%);
}
```
